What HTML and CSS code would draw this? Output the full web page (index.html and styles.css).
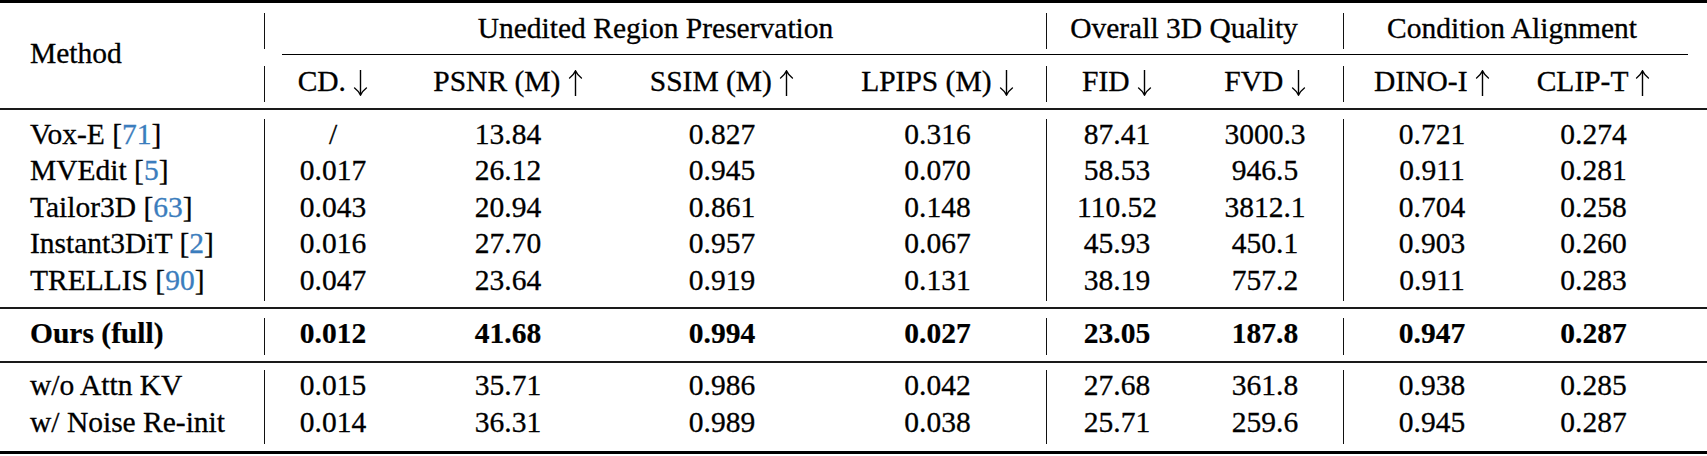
FILE: index.html
```html
<!DOCTYPE html>
<html lang="en">
<head>
<meta charset="utf-8">
<title>Results table</title>
<link rel="stylesheet" href="styles.css">
</head>
<body>
<table class="results">
  <colgroup>
    <col class="w-method">
    <col class="w-sep">
    <col class="w-cd">
    <col class="w-psnr">
    <col class="w-ssim">
    <col class="w-lpips">
    <col class="w-sep">
    <col class="w-fid">
    <col class="w-fvd">
    <col class="w-sep">
    <col class="w-dino">
    <col class="w-clip">
  </colgroup>
  <tbody>
    <tr><td colspan="12" class="rule rule-top"><div class="line heavy"></div></td></tr>
    <tr class="head">
      <td class="method" rowspan="3">Method</td>
      <td class="sep"></td>
      <td colspan="4">Unedited Region Preservation</td>
      <td class="sep"></td>
      <td colspan="2" class="grp-quality">Overall 3D Quality</td>
      <td class="sep"></td>
      <td colspan="2" class="grp-align clip">Condition Alignment</td>
    </tr>
    <tr>
      <td></td>
      <td colspan="10" class="rule rule-cmid"><div class="line thin"></div></td>
    </tr>
    <tr class="head">
      <td class="sep"></td>
      <td>CD. <svg class="arrow" viewBox="0 0 15 26" aria-label="down"><path d="M7.5 0 V25.2 M1.6 18 Q5.6 21 7.5 25.2 Q9.4 21 13.4 18"/></svg></td>
      <td>PSNR (M) <svg class="arrow" viewBox="0 0 15 26" aria-label="up"><path d="M7.5 26 V0.8 M1.6 8 Q5.6 5 7.5 0.8 Q9.4 5 13.4 8"/></svg></td>
      <td>SSIM (M) <svg class="arrow" viewBox="0 0 15 26" aria-label="up"><path d="M7.5 26 V0.8 M1.6 8 Q5.6 5 7.5 0.8 Q9.4 5 13.4 8"/></svg></td>
      <td>LPIPS (M) <svg class="arrow" viewBox="0 0 15 26" aria-label="down"><path d="M7.5 0 V25.2 M1.6 18 Q5.6 21 7.5 25.2 Q9.4 21 13.4 18"/></svg></td>
      <td class="sep"></td>
      <td>FID <svg class="arrow" viewBox="0 0 15 26" aria-label="down"><path d="M7.5 0 V25.2 M1.6 18 Q5.6 21 7.5 25.2 Q9.4 21 13.4 18"/></svg></td>
      <td>FVD <svg class="arrow" viewBox="0 0 15 26" aria-label="down"><path d="M7.5 0 V25.2 M1.6 18 Q5.6 21 7.5 25.2 Q9.4 21 13.4 18"/></svg></td>
      <td class="sep"></td>
      <td>DINO-I <svg class="arrow" viewBox="0 0 15 26" aria-label="up"><path d="M7.5 26 V0.8 M1.6 8 Q5.6 5 7.5 0.8 Q9.4 5 13.4 8"/></svg></td>
      <td class="clip">CLIP-T <svg class="arrow" viewBox="0 0 15 26" aria-label="up"><path d="M7.5 26 V0.8 M1.6 8 Q5.6 5 7.5 0.8 Q9.4 5 13.4 8"/></svg></td>
    </tr>
    <tr><td colspan="12" class="rule rule-mid"><div class="line mid"></div></td></tr>
    <tr class="row">
      <td class="name">Vox-E [<span class="cite">71</span>]</td>
      <td class="sep"></td>
      <td>/</td><td>13.84</td><td>0.827</td><td>0.316</td>
      <td class="sep"></td>
      <td>87.41</td><td>3000.3</td>
      <td class="sep"></td>
      <td>0.721</td><td class="clip">0.274</td>
    </tr>
    <tr class="row">
      <td class="name">MVEdit [<span class="cite">5</span>]</td>
      <td class="sep"></td>
      <td>0.017</td><td>26.12</td><td>0.945</td><td>0.070</td>
      <td class="sep"></td>
      <td>58.53</td><td>946.5</td>
      <td class="sep"></td>
      <td>0.911</td><td class="clip">0.281</td>
    </tr>
    <tr class="row">
      <td class="name">Tailor3D [<span class="cite">63</span>]</td>
      <td class="sep"></td>
      <td>0.043</td><td>20.94</td><td>0.861</td><td>0.148</td>
      <td class="sep"></td>
      <td>110.52</td><td>3812.1</td>
      <td class="sep"></td>
      <td>0.704</td><td class="clip">0.258</td>
    </tr>
    <tr class="row">
      <td class="name">Instant3DiT [<span class="cite">2</span>]</td>
      <td class="sep"></td>
      <td>0.016</td><td>27.70</td><td>0.957</td><td>0.067</td>
      <td class="sep"></td>
      <td>45.93</td><td>450.1</td>
      <td class="sep"></td>
      <td>0.903</td><td class="clip">0.260</td>
    </tr>
    <tr class="row">
      <td class="name">TRELLIS [<span class="cite">90</span>]</td>
      <td class="sep"></td>
      <td>0.047</td><td>23.64</td><td>0.919</td><td>0.131</td>
      <td class="sep"></td>
      <td>38.19</td><td>757.2</td>
      <td class="sep"></td>
      <td>0.911</td><td class="clip">0.283</td>
    </tr>
    <tr><td colspan="12" class="rule rule-mid"><div class="line mid"></div></td></tr>
    <tr class="row best">
      <td class="name">Ours (full)</td>
      <td class="sep"></td>
      <td>0.012</td><td>41.68</td><td>0.994</td><td>0.027</td>
      <td class="sep"></td>
      <td>23.05</td><td>187.8</td>
      <td class="sep"></td>
      <td>0.947</td><td class="clip">0.287</td>
    </tr>
    <tr><td colspan="12" class="rule rule-mid2"><div class="line mid"></div></td></tr>
    <tr class="row row-abl">
      <td class="name">w/o Attn KV</td>
      <td class="sep"></td>
      <td>0.015</td><td>35.71</td><td>0.986</td><td>0.042</td>
      <td class="sep"></td>
      <td>27.68</td><td>361.8</td>
      <td class="sep"></td>
      <td>0.938</td><td class="clip">0.285</td>
    </tr>
    <tr class="row row-abl">
      <td class="name">w/ Noise Re-init</td>
      <td class="sep"></td>
      <td>0.014</td><td>36.31</td><td>0.989</td><td>0.038</td>
      <td class="sep"></td>
      <td>25.71</td><td>259.6</td>
      <td class="sep"></td>
      <td>0.945</td><td class="clip">0.287</td>
    </tr>
    <tr><td colspan="12" class="rule rule-bottom"><div class="line heavy"></div></td></tr>
  </tbody>
</table>
</body>
</html>
```

FILE: styles.css
```css
html, body {
  margin: 0;
  padding: 0;
  background: #ffffff;
}

.results {
  width: 1707px;
  border-collapse: collapse;
  border-spacing: 0;
  table-layout: fixed;
  font-family: "Liberation Serif", "Times New Roman", serif;
  font-size: 29.5px;
  color: #000000;
  -webkit-text-stroke: 0.3px #000000;
}

.w-method { width: 264px; }
.w-sep { width: 1px; }
.w-cd { width: 136px; }
.w-psnr { width: 214px; }
.w-ssim { width: 214px; }
.w-lpips { width: 217px; }
.w-fid { width: 140px; }
.w-fvd { width: 156px; }
.w-dino { width: 176px; }
.w-clip { width: 187px; }

.results td {
  padding: 0;
  text-align: center;
  vertical-align: top;
  line-height: 31.4px;
  white-space: nowrap;
}

.results .sep {
  background: #111111;
}

.head td {
  height: 36px;
}

.row td {
  height: 36.6px;
}

.row-abl td {
  height: 37px;
}

.results td.method {
  text-align: left;
  vertical-align: middle;
  padding-left: 30px;
  padding-bottom: 6px;
}

.results td.name {
  text-align: left;
  padding-left: 30px;
}

.results td.clip {
  padding-right: 40px;
}

.results td.grp-quality {
  padding-right: 22px;
}

.results td.grp-align {
  padding-right: 27px;
}

.best td {
  font-weight: 700;
  -webkit-text-stroke: 0.2px #000000;
}

.cite {
  color: #3b7dbd;
  -webkit-text-stroke: 0.3px #3b7dbd;
}

.arrow {
  width: 15px;
  height: 26px;
  vertical-align: -5.5px;
  fill: none;
  stroke: currentColor;
  stroke-width: 1.4;
  stroke-linecap: round;
  stroke-linejoin: round;
}

.results td.rule {
  line-height: 0;
  font-size: 0;
}

.results td.rule-top { padding: 0 0 10px; }
.results td.rule-cmid { padding: 5px 0 11px; }
.results td.rule-mid { padding: 6px 0 9px; }
.results td.rule-mid2 { padding: 6px 0 7px; }
.results td.rule-bottom { padding: 7px 0 0; }

.line {
  background: #000000;
}

.line.heavy { height: 2.5px; }
.line.mid { height: 2px; background: #1a1a1a; }
.line.thin {
  height: 1px;
  margin: 0 19px 0 17px;
}
```
